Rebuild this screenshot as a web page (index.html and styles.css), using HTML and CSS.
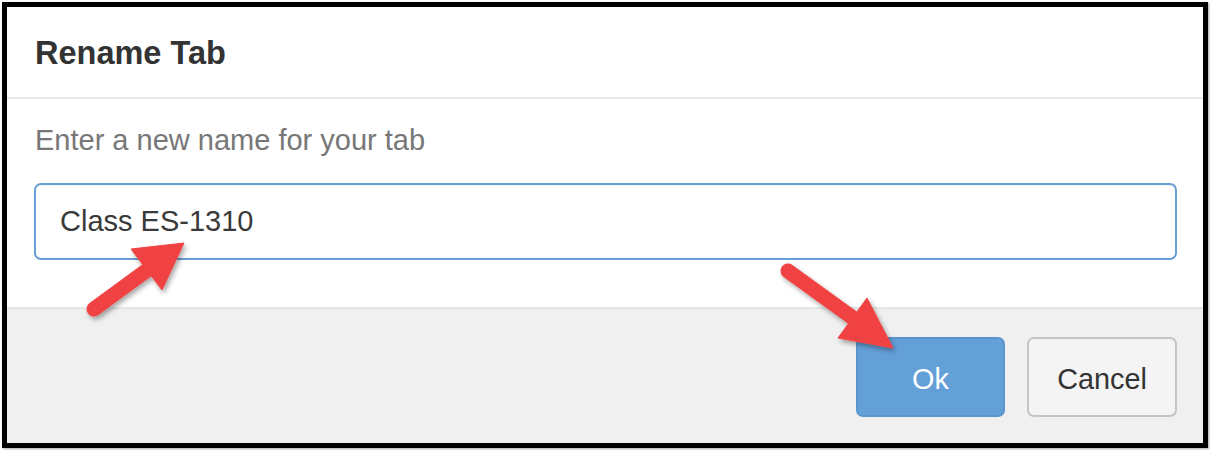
FILE: index.html
```html
<!DOCTYPE html>
<html>
<head>
<meta charset="utf-8">
<link rel="stylesheet" href="styles.css">
</head>
<body>
<div class="frame">
  <div class="modal-header"><h4 class="modal-title">Rename Tab</h4></div>
  <div class="modal-body">
    <p class="label">Enter a new name for your tab</p>
    <div class="input">Class ES-1310</div>
  </div>
  <div class="modal-footer">
    <button class="btn btn-primary">Ok</button>
    <button class="btn btn-default">Cancel</button>
  </div>
</div>
<svg class="arrows" width="1212" height="452" viewBox="0 0 1212 452">
  <defs>
    <filter id="sh" x="-20%" y="-20%" width="140%" height="140%">
      <feDropShadow dx="2" dy="3" stdDeviation="2.5" flood-color="#000" flood-opacity="0.35"/>
    </filter>
  </defs>
  <g filter="url(#sh)" fill="#f04343" stroke="#f04343">
    <line x1="94" y1="309" x2="150" y2="268" stroke-width="15" stroke-linecap="round"/>
    <polygon points="184,243 131,249 162,290" stroke-width="1" stroke-linejoin="round"/>
    <line x1="788" y1="271" x2="853" y2="318" stroke-width="15" stroke-linecap="round"/>
    <polygon points="893,348 838,338 867,298" stroke-width="1" stroke-linejoin="round"/>
  </g>
</svg>
</body>
</html>
```
FILE: styles.css
```css
html, body {
  margin: 0;
  padding: 0;
  background: #fff;
}
body {
  width: 1212px;
  height: 452px;
  position: relative;
  overflow: hidden;
  font-family: "Liberation Sans", Arial, sans-serif;
}
.frame {
  margin: 2px 0 0 2px;
  width: 1196px;
  height: 436px;
  border: 5px solid #000;
  display: flex;
  flex-direction: column;
  background: #fff;
  box-shadow: 1px 1px 2px rgba(0,0,0,0.35);
}
.modal-header {
  height: 90px;
  border-bottom: 2px solid #e9e9e9;
  display: flex;
  align-items: center;
  padding: 0 28px;
}
.modal-title {
  margin: 0;
  font-size: 32.5px;
  font-weight: bold;
  color: #333;
  line-height: 36px;
  padding-top: 1px;
}
.modal-body {
  padding: 25px 26px 47px 27px;
}
.label {
  margin: 0 0 27px 1px;
  font-size: 29px;
  line-height: 32px;
  color: #777;
}
.input {
  box-sizing: border-box;
  height: 77px;
  border: 2px solid #6a9fd5;
  border-radius: 7px;
  padding: 0 24px;
  display: flex;
  align-items: center;
  font-size: 29px;
  color: #3a3a3a;
  box-shadow: inset 0 1px 1px rgba(0,0,0,0.05);
}
.modal-footer {
  flex: 1;
  background: #f0f0f0;
  border-top: 2px solid #e6e6e6;
  padding: 28px 26px 26px;
  display: flex;
  justify-content: flex-end;
  align-items: flex-start;
  gap: 22px;
}
.btn {
  box-sizing: border-box;
  height: 80px;
  border-radius: 7px;
  font-family: "Liberation Sans", Arial, sans-serif;
  font-size: 28.8px;
  padding: 4px 0 0;
  margin: 0;
}
.btn-primary {
  width: 149px;
  background: #64a0d8;
  border: 2px solid #5b95cd;
  color: #fff;
}
.btn-default {
  width: 150px;
  background: #f4f4f4;
  border: 2px solid #c4c4c4;
  color: #333;
}
.arrows {
  position: absolute;
  left: 0;
  top: 0;
  pointer-events: none;
}
```
